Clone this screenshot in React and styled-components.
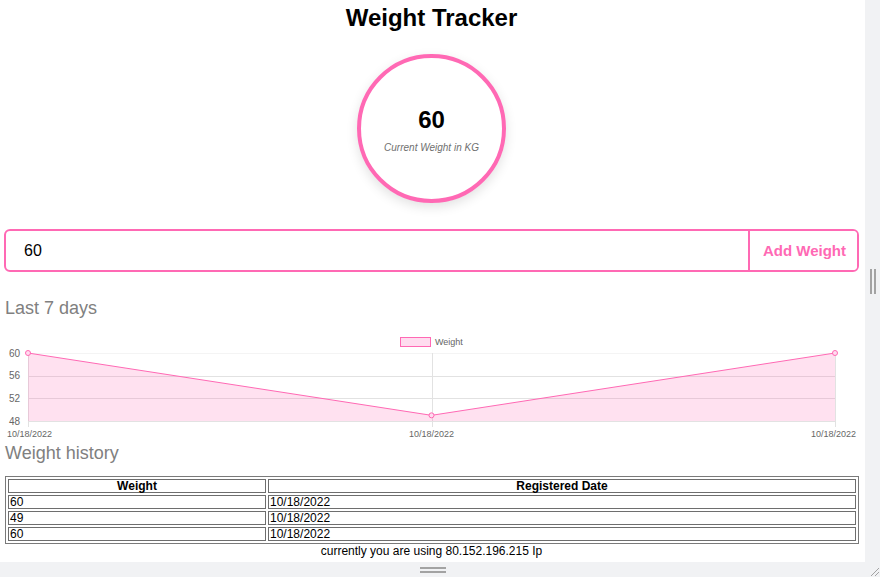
import React, { useState } from 'react';
import styled, { createGlobalStyle } from 'styled-components';

const GlobalStyle = createGlobalStyle`
  html, body {
    margin: 0;
    padding: 0;
    background: #f1f2f4;
    font-family: "Liberation Sans", Arial, sans-serif;
  }
`;

const PINK = '#ff69b4';

const Frame = styled.div`
  display: grid;
  grid-template-columns: 865px 15px;
  grid-template-rows: 562px 15px;
  width: 880px;
  height: 577px;
  overflow: hidden;
  background: #f1f2f4;
`;

const Page = styled.div`
  background: #fff;
  overflow: hidden;
  padding: 0 6px 0 4px;
  display: flex;
  flex-direction: column;
`;

const SideGutter = styled.div`
  display: flex;
  align-items: center;
  justify-content: center;
  gap: 2px;
`;

const BottomGutter = styled.div`
  display: flex;
  flex-direction: column;
  align-items: center;
  justify-content: center;
  gap: 2px;
`;

const Grip = styled.span`
  display: block;
  background: #a3a3a3;
  width: ${(p) => (p.$vertical ? '2px' : '26px')};
  height: ${(p) => (p.$vertical ? '25px' : '2px')};
`;

const Corner = styled.div`
  display: flex;
  align-items: flex-end;
  justify-content: flex-end;
`;

const Title = styled.h1`
  margin: 0;
  padding-top: 4px;
  font-size: 24px;
  line-height: 28px;
  font-weight: bold;
  text-align: center;
  color: #000;
`;

const Dial = styled.div`
  align-self: center;
  margin-top: 22px;
  width: 141px;
  height: 141px;
  border: 4px solid ${PINK};
  border-radius: 50%;
  box-shadow: 0 4px 12px rgba(0, 0, 0, 0.12);
  display: flex;
  flex-direction: column;
  align-items: center;
  justify-content: center;
  gap: 9px;
`;

const DialValue = styled.div`
  font-size: 24px;
  font-weight: bold;
  line-height: 26px;
  color: #000;
  margin-top: 2px;
`;

const DialLabel = styled.div`
  font-size: 10px;
  font-style: italic;
  color: #6f6f6f;
`;

const InputGroup = styled.form`
  margin-top: 26px;
  height: 43px;
  box-sizing: border-box;
  border: 2px solid ${PINK};
  border-radius: 6px;
  display: flex;
  overflow: hidden;
`;

const WeightInput = styled.input`
  flex: 1;
  border: none;
  outline: none;
  padding: 0 0 0 18px;
  font-family: "Liberation Sans", Arial, sans-serif;
  font-size: 16px;
  color: #000;
  background: transparent;
`;

const AddButton = styled.button`
  border: none;
  border-left: 2px solid ${PINK};
  background: #fff;
  color: ${PINK};
  font-family: "Liberation Sans", Arial, sans-serif;
  font-weight: bold;
  font-size: 15px;
  padding: 0 11px 0 13px;
  cursor: pointer;
`;

const SectionTitle = styled.h2`
  margin: ${(p) => p.$mt || '0'} 0 0 1px;
  font-size: 18px;
  font-weight: normal;
  line-height: 22px;
  color: #808080;
`;

const ChartSvg = styled.svg`
  display: block;
  width: 855px;
  height: 112px;
  margin-top: 11px;
`;

const HistoryTable = styled.table`
  margin: 12px 0 0 1px;
  width: 854px;
  border: 1px solid #7a7a7a;
  border-spacing: 2px;
  font-size: 12px;
  color: #000;
`;

const HeadCell = styled.th`
  border: 1px solid #6e6e6e;
  padding: 0 1px;
  line-height: 12px;
  font-weight: bold;
  width: ${(p) => p.$w || 'auto'};
`;

const Cell = styled.td`
  border: 1px solid #6e6e6e;
  padding: 0 1px;
  line-height: 12px;
`;

const Footer = styled.div`
  text-align: center;
  font-size: 12px;
  line-height: 14px;
  color: #000;
`;

const entries = [
  { weight: 60, date: '10/18/2022' },
  { weight: 49, date: '10/18/2022' },
  { weight: 60, date: '10/18/2022' },
];

const Chart = ({ data }) => {
  const left = 28;
  const right = 835;
  const top = 353;
  const bottom = 421;
  const min = 48;
  const max = 60;
  const xs = data.map((_, i) => left + ((right - left) * i) / (data.length - 1));
  const ys = data.map((d) => bottom - ((d.weight - min) / (max - min)) * (bottom - top));
  const line = xs.map((x, i) => `${x},${ys[i]}`).join(' ');
  const area = `${left},${bottom} ${line} ${right},${bottom}`;
  const ticks = [60, 56, 52, 48];
  return (
    <ChartSvg viewBox="4 330 855 112">
      <rect x="400.5" y="337.5" width="30" height="9" fill="#ffdcef" stroke={PINK} strokeWidth="1" />
      <text x="435" y="345" fontSize="9" fill="#666" fontFamily="Liberation Sans, Arial, sans-serif">Weight</text>
      {ticks.map((t, i) => {
        const y = bottom - ((t - min) / (max - min)) * (bottom - top);
        const yy = Math.round(y) + 0.5;
        return (
          <g key={t}>
            <line x1={left} x2={right} y1={yy} y2={yy} stroke={i === 0 ? '#f4f4f4' : '#e2e2e2'} />
            <text x="20" y={y + 3.5} fontSize="10" fill="#666" textAnchor="end" fontFamily="Liberation Sans, Arial, sans-serif">{t}</text>
          </g>
        );
      })}
      {xs.map((x) => (
        <line key={x} x1={Math.round(x) + 0.5} x2={Math.round(x) + 0.5} y1={top} y2={427} stroke="#e2e2e2" />
      ))}
      <polygon points={area} fill="rgba(255,105,180,0.2)" />
      <polyline points={line} fill="none" stroke={PINK} strokeWidth="1" />
      {xs.map((x, i) => (
        <circle key={i} cx={x} cy={ys[i]} r="2.5" fill="#ffdcef" stroke={PINK} strokeWidth="1" />
      ))}
      {data.map((d, i) => (
        <text
          key={i}
          x={i === 0 ? 7 : i === data.length - 1 ? 856 : xs[i]}
          y="437"
          fontSize="9"
          fill="#666"
          textAnchor={i === 0 ? 'start' : i === data.length - 1 ? 'end' : 'middle'}
          fontFamily="Liberation Sans, Arial, sans-serif"
        >
          {d.date}
        </text>
      ))}
    </ChartSvg>
  );
};

const ResizeCorner = () => (
  <svg width="12" height="12" viewBox="0 0 12 12">
    <line x1="11" y1="3" x2="3" y2="11" stroke="#a3a3a3" strokeWidth="1" />
    <line x1="11" y1="7" x2="7" y2="11" stroke="#a3a3a3" strokeWidth="1" />
  </svg>
);

const App = () => {
  const [value, setValue] = useState('60');
  const current = entries[entries.length - 1].weight;
  return (
    <>
      <GlobalStyle />
      <Frame>
        <Page>
          <Title>Weight Tracker</Title>
          <Dial>
            <DialValue>{current}</DialValue>
            <DialLabel>Current Weight in KG</DialLabel>
          </Dial>
          <InputGroup onSubmit={(e) => e.preventDefault()}>
            <WeightInput value={value} onChange={(e) => setValue(e.target.value)} />
            <AddButton type="submit">Add Weight</AddButton>
          </InputGroup>
          <SectionTitle $mt="25px">Last 7 days</SectionTitle>
          <Chart data={entries} />
          <SectionTitle>Weight history</SectionTitle>
          <HistoryTable>
            <thead>
              <tr>
                <HeadCell $w="30.5%">Weight</HeadCell>
                <HeadCell>Registered Date</HeadCell>
              </tr>
            </thead>
            <tbody>
              {entries.map((e, i) => (
                <tr key={i}>
                  <Cell>{e.weight}</Cell>
                  <Cell>{e.date}</Cell>
                </tr>
              ))}
            </tbody>
          </HistoryTable>
          <Footer>currently you are using 80.152.196.215 Ip</Footer>
        </Page>
        <SideGutter>
          <Grip $vertical />
          <Grip $vertical />
        </SideGutter>
        <BottomGutter>
          <Grip />
          <Grip />
        </BottomGutter>
        <Corner>
          <ResizeCorner />
        </Corner>
      </Frame>
    </>
  );
};

export default App;
